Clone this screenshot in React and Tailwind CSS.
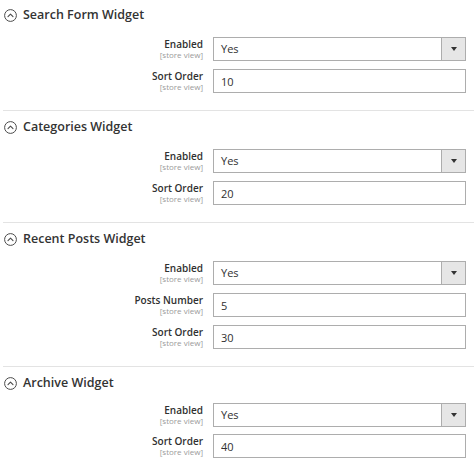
import { useState } from 'react'

const sections = [
  {
    title: 'Search Form Widget',
    fields: [
      { label: 'Enabled', type: 'select', value: 'Yes' },
      { label: 'Sort Order', type: 'text', value: '10' },
    ],
  },
  {
    title: 'Categories Widget',
    fields: [
      { label: 'Enabled', type: 'select', value: 'Yes' },
      { label: 'Sort Order', type: 'text', value: '20' },
    ],
  },
  {
    title: 'Recent Posts Widget',
    fields: [
      { label: 'Enabled', type: 'select', value: 'Yes' },
      { label: 'Posts Number', type: 'text', value: '5' },
      { label: 'Sort Order', type: 'text', value: '30' },
    ],
  },
  {
    title: 'Archive Widget',
    fields: [
      { label: 'Enabled', type: 'select', value: 'Yes' },
      { label: 'Sort Order', type: 'text', value: '40' },
    ],
  },
]

function CollapseIcon() {
  return (
    <svg width="13" height="13" viewBox="0 0 13 13" fill="none" className="shrink-0">
      <circle cx="6.5" cy="6.5" r="5.9" stroke="#4a4a4a" strokeWidth="1" />
      <path d="M4 7.6 L6.5 5.1 L9 7.6" stroke="#4a4a4a" strokeWidth="1.1" strokeLinecap="round" strokeLinejoin="round" />
    </svg>
  )
}

function Field({ field }) {
  const [value, setValue] = useState(field.value)
  return (
    <div className="flex h-[24px] items-start">
      <div className="w-[200px] shrink-0 pt-[1px] text-right">
        <div className="text-[10px] leading-[12px] font-semibold text-[#303030]">{field.label}</div>
        <div className="text-[8px] leading-[10px] text-[#9a9a9a]">[store view]</div>
      </div>
      <div className="ml-[10px] flex-1">
        {field.type === 'select' ? (
          <div className="flex h-[24px] border border-[#adadad] bg-white">
            <div className="flex flex-1 items-center pl-[7px] text-[11px] text-[#303030]">{value}</div>
            <div className="flex w-[24px] items-center justify-center border-l border-[#adadad] bg-[#e6e6e6]">
              <span className="h-0 w-0 border-x-[3px] border-t-[4px] border-x-transparent border-t-[#333]" />
            </div>
          </div>
        ) : (
          <input
            className="block h-[24px] w-full border border-[#adadad] bg-white pl-[7px] text-[11px] text-[#303030] outline-none"
            value={value}
            onChange={(e) => setValue(e.target.value)}
          />
        )}
      </div>
    </div>
  )
}

export default function App() {
  return (
    <div className="w-[474px] bg-white font-['Open_Sans',sans-serif]">
      {sections.map((s, i) => (
        <section
          key={s.title}
          className={
            i === 0
              ? 'ml-[3px] pt-[5px] pb-[17px] pr-[8px]'
              : 'ml-[3px] border-t border-[#e3e3e3] pt-[6px] pb-[17px] pr-[8px]'
          }
        >
          <div className="flex h-[20px] items-center gap-[6px] pl-[1px]">
            <CollapseIcon />
            <h3 className="text-[12.5px] font-semibold text-[#333]">{s.title}</h3>
          </div>
          <div
            className={
              i === sections.length - 1
                ? 'mt-[10px] flex flex-col gap-[7px]'
                : 'mt-[12px] flex flex-col gap-[8px]'
            }
          >
            {s.fields.map((f) => (
              <Field key={f.label} field={f} />
            ))}
          </div>
        </section>
      ))}
    </div>
  )
}
